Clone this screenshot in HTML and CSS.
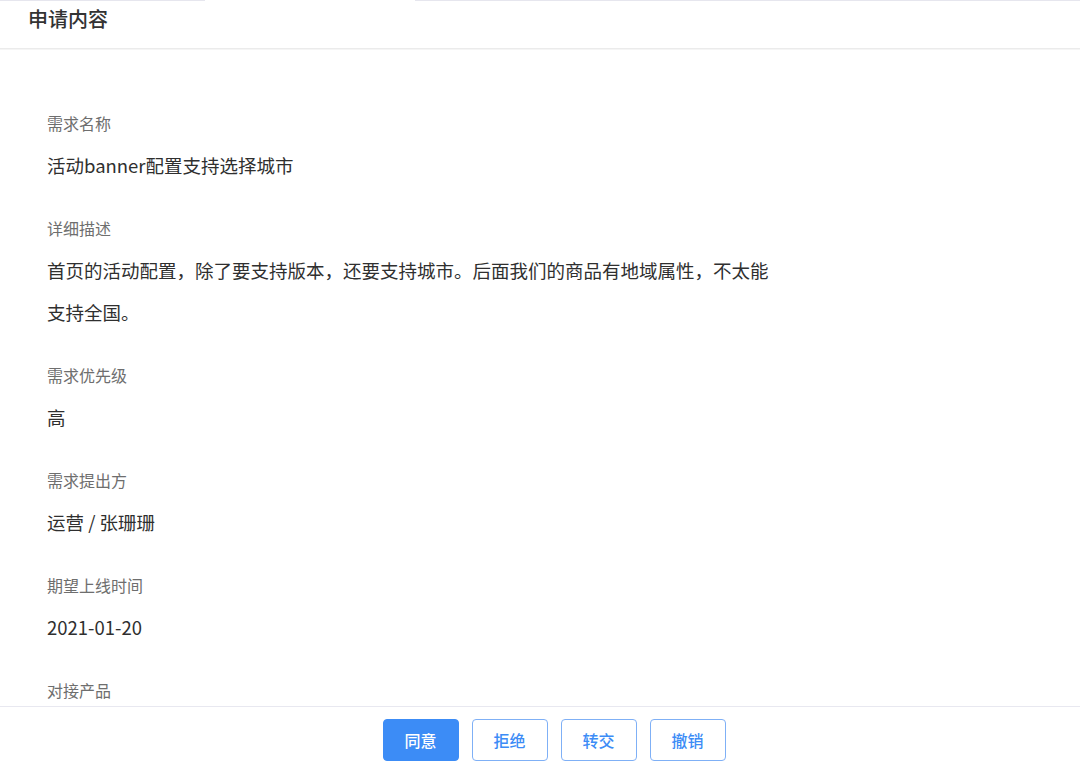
FILE: index.html
```html
<!DOCTYPE html>
<html lang="zh-CN">
<head>
<meta charset="utf-8">
<title>申请内容</title>
<link rel="stylesheet" href="styles.css">
</head>
<body>
<div class="page">
  <div class="topline"><span class="seg seg-left"></span><span class="seg seg-gap"></span><span class="seg seg-right"></span></div>
  <header class="header">
    <h1 class="title">申请内容</h1>
  </header>
  <main class="content">
    <div class="field">
      <div class="label">需求名称</div>
      <div class="value">活动banner配置支持选择城市</div>
    </div>
    <div class="field">
      <div class="label">详细描述</div>
      <div class="value">首页的活动配置，除了要支持版本，还要支持城市。后面我们的商品有地域属性，不太能支持全国。</div>
    </div>
    <div class="field">
      <div class="label">需求优先级</div>
      <div class="value">高</div>
    </div>
    <div class="field">
      <div class="label">需求提出方</div>
      <div class="value">运营 / 张珊珊</div>
    </div>
    <div class="field">
      <div class="label">期望上线时间</div>
      <div class="value">2021-01-20</div>
    </div>
    <div class="field">
      <div class="label">对接产品</div>
    </div>
  </main>
  <footer class="footer">
    <button class="btn btn-primary">同意</button>
    <button class="btn">拒绝</button>
    <button class="btn">转交</button>
    <button class="btn">撤销</button>
  </footer>
</div>
</body>
</html>
```
FILE: styles.css
```css
* { box-sizing: border-box; }
html, body {
  margin: 0;
  padding: 0;
  background: #ffffff;
}
body {
  font-family: "Noto Sans CJK SC", "Noto Sans", sans-serif;
  color: #333333;
}
.page {
  width: 1080px;
  height: 770px;
  display: flex;
  flex-direction: column;
  overflow: hidden;
}
.topline {
  display: flex;
  height: 1px;
  flex: 0 0 1px;
}
.seg { display: block; height: 1px; }
.seg-left { width: 205px; background: #e6e6ee; }
.seg-gap { width: 210px; background: #ffffff; }
.seg-right { flex: 1; background: #e6e6ee; }
.header {
  flex: 0 0 48px;
  border-bottom: 1px solid #ebebeb;
  box-shadow: 0 1px 0 #f5f5f5;
  padding-left: 28px;
}
.title {
  margin: 0;
  font-size: 20px;
  font-weight: 500;
  line-height: 36px;
  color: #333333;
}
.content {
  flex: 1;
  overflow: hidden;
  padding: 63px 0 0 47px;
}
.field {
  margin-bottom: 31px;
}
.label {
  font-size: 16px;
  line-height: 22px;
  color: #6e6e6e;
  margin-bottom: 10px;
}
.value {
  font-size: 18.5px;
  line-height: 42px;
  color: #2f2f2f;
  max-width: 735px;
}
.footer {
  flex: 0 0 64px;
  border-top: 1px solid #e8e8f0;
  display: flex;
  justify-content: center;
  align-items: flex-start;
  gap: 13px;
  padding-top: 12px;
  padding-left: 28px;
  background: #ffffff;
}
.btn {
  width: 76px;
  height: 42px;
  border: 1px solid #7fb0f6;
  border-radius: 4px;
  background: #ffffff;
  color: #3c8cf6;
  font-family: "Noto Sans CJK SC", "Noto Sans", sans-serif;
  font-size: 16px;
  font-weight: 500;
  padding: 0;
}
.btn-primary {
  background: #3c8cf6;
  border-color: #3c8cf6;
  color: #ffffff;
}
```
